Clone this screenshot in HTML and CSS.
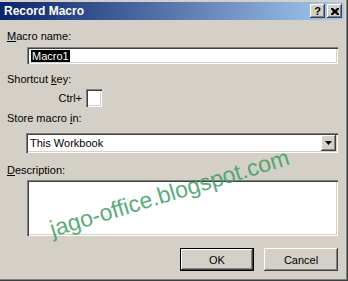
FILE: index.html
```html
<!DOCTYPE html>
<html>
<head>
<meta charset="utf-8">
<link rel="stylesheet" href="styles.css">
</head>
<body>
<div class="window">
  <div class="titlebar">
    <span class="title">Record Macro</span>
    <div class="caption-btns">
      <span class="cbtn help">?</span>
      <span class="cbtn close"><svg width="8" height="7" viewBox="0 0 8 7"><path d="M0 0h2l2 2 2-2h2v1L6 3.5 8 6v1H6L4 5 2 7H0V6l2-2.5L0 1z" fill="#000"/></svg></span>
    </div>
  </div>
  <div class="content">
    <div class="label"><u>M</u>acro name:</div>
    <div class="field name"><span class="sel">Macro1</span></div>
    <div class="label l-key">Shortcut <u>k</u>ey:</div>
    <div class="shortcut"><span class="ctrl">Ctrl+</span><span class="keybox"></span></div>
    <div class="label l-store">Store macro <u>i</u>n:</div>
    <div class="field combo"><span class="combo-text">This Workbook</span><span class="drop"><svg width="7" height="4" viewBox="0 0 7 4"><path d="M0 0h7L3.5 4z" fill="#000"/></svg></span></div>
    <div class="label l-desc"><u>D</u>escription:</div>
    <div class="field desc"></div>
    <div class="buttons"><span class="btn default">OK</span><span class="btn">Cancel</span></div>
  </div>
  <div class="watermark">jago-office.blogspot.com</div>
</div>
</body>
</html>
```
FILE: styles.css
```css
html, body {
  margin: 0;
  padding: 0;
}
body {
  width: 348px;
  height: 281px;
  overflow: hidden;
  background: #d4d0c8;
  font-family: "Liberation Sans", Arial, sans-serif;
  font-size: 11px;
  color: #000;
}
.window {
  position: relative;
  box-sizing: border-box;
  width: 348px;
  height: 281px;
  padding: 2px 4px 2px 0;
  background: #d4d0c8;
  box-shadow: inset -1px -1px #404040, inset -2px -2px #808080;
}
.titlebar {
  height: 18px;
  display: flex;
  align-items: center;
  justify-content: space-between;
  padding: 0 2px 0 4px;
  background: linear-gradient(to right, #0a246a, #a6caf0);
}
.title {
  color: #fff;
  font-weight: bold;
  font-size: 12px;
}
.caption-btns {
  display: flex;
  gap: 2px;
}
.cbtn {
  box-sizing: border-box;
  width: 15px;
  height: 14px;
  display: flex;
  align-items: center;
  justify-content: center;
  background: #d4d0c8;
  box-shadow: inset -1px -1px #404040, inset 1px 1px #fff, inset -2px -2px #808080;
}
.help {
  font-weight: bold;
  font-size: 11px;
  line-height: 14px;
}
.content {
  padding: 10px 6px 0 7px;
}
.label {
  line-height: 13px;
}
.label u {
  text-decoration-thickness: 1px;
}
.l-key { margin-top: 9px; }
.l-store { margin-top: 5px; }
.l-desc { margin-top: 11px; }
.field {
  box-sizing: border-box;
  background: #fff;
  box-shadow: inset 1px 1px #808080, inset 2px 2px #404040, inset -1px -1px #fff, inset -2px -2px #d4d0c8;
}
.name {
  margin: 4px 0 0 20px;
  height: 17px;
  display: flex;
  align-items: center;
  padding-left: 4px;
}
.sel {
  background: #000;
  color: #fff;
  line-height: 12px;
  padding: 0 1px;
}
.shortcut {
  margin-top: 3px;
  height: 18px;
  display: flex;
  align-items: center;
  gap: 4px;
  padding-left: 46px;
}
.ctrl {
  width: 29px;
  text-align: right;
}
.keybox {
  box-sizing: border-box;
  width: 16px;
  height: 18px;
  background: #fff;
  box-shadow: inset 1px 1px #808080, inset 2px 2px #404040, inset -1px -1px #fff, inset -2px -2px #d4d0c8;
}
.combo {
  margin: 8px 0 0 19px;
  height: 20px;
  display: flex;
  align-items: center;
  padding: 2px;
}
.combo-text {
  flex: 1;
  padding-left: 2px;
}
.drop {
  box-sizing: border-box;
  width: 15px;
  height: 16px;
  display: flex;
  align-items: center;
  justify-content: center;
  background: #d4d0c8;
  box-shadow: inset -1px -1px #404040, inset 1px 1px #fff, inset -2px -2px #808080;
}
.desc {
  margin: 3px 0 0 20px;
  height: 56px;
}
.buttons {
  margin-top: 12px;
  display: flex;
  justify-content: flex-end;
  gap: 10px;
}
.btn {
  box-sizing: border-box;
  width: 74px;
  height: 23px;
  display: flex;
  align-items: center;
  justify-content: center;
  background: #d4d0c8;
  box-shadow: inset -1px -1px #404040, inset 1px 1px #fff, inset -2px -2px #808080;
}
.btn.default {
  border: 1px solid #000;
}
.watermark {
  position: absolute;
  left: 53px;
  top: 218px;
  font-size: 23px;
  line-height: 23px;
  color: #3d9e63;
  opacity: 0.85;
  white-space: nowrap;
  transform-origin: 0 19.5px;
  transform: rotate(-17deg);
}
```
